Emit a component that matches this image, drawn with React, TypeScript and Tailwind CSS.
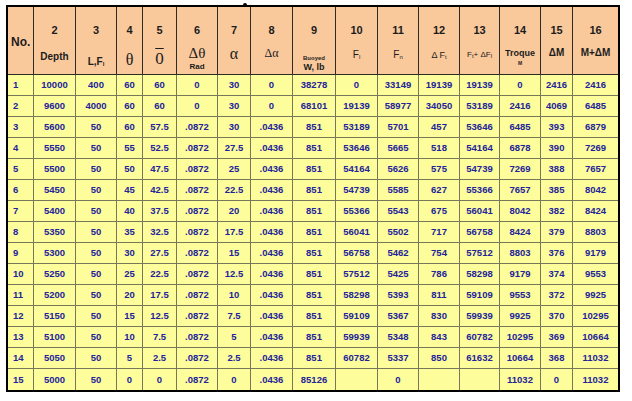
import type { ReactNode } from "react";

const WIDTHS = [26, 42, 41, 26, 34, 41, 33, 42, 43, 42, 41, 41, 40, 41, 32, 45];

const ROWS: string[][] = [
  ["1", "10000", "400", "60", "60", "0", "30", "0", "38278", "0", "33149", "19139", "19139", "0", "2416", "2416"],
  ["2", "9600", "4000", "60", "60", "0", "30", "0", "68101", "19139", "58977", "34050", "53189", "2416", "4069", "6485"],
  ["3", "5600", "50", "60", "57.5", ".0872", "30", ".0436", "851", "53189", "5701", "457", "53646", "6485", "393", "6879"],
  ["4", "5550", "50", "55", "52.5", ".0872", "27.5", ".0436", "851", "53646", "5665", "518", "54164", "6878", "390", "7269"],
  ["5", "5500", "50", "50", "47.5", ".0872", "25", ".0436", "851", "54164", "5626", "575", "54739", "7269", "388", "7657"],
  ["6", "5450", "50", "45", "42.5", ".0872", "22.5", ".0436", "851", "54739", "5585", "627", "55366", "7657", "385", "8042"],
  ["7", "5400", "50", "40", "37.5", ".0872", "20", ".0436", "851", "55366", "5543", "675", "56041", "8042", "382", "8424"],
  ["8", "5350", "50", "35", "32.5", ".0872", "17.5", ".0436", "851", "56041", "5502", "717", "56758", "8424", "379", "8803"],
  ["9", "5300", "50", "30", "27.5", ".0872", "15", ".0436", "851", "56758", "5462", "754", "57512", "8803", "376", "9179"],
  ["10", "5250", "50", "25", "22.5", ".0872", "12.5", ".0436", "851", "57512", "5425", "786", "58298", "9179", "374", "9553"],
  ["11", "5200", "50", "20", "17.5", ".0872", "10", ".0436", "851", "58298", "5393", "811", "59109", "9553", "372", "9925"],
  ["12", "5150", "50", "15", "12.5", ".0872", "7.5", ".0436", "851", "59109", "5367", "830", "59939", "9925", "370", "10295"],
  ["13", "5100", "50", "10", "7.5", ".0872", "5", ".0436", "851", "59939", "5348", "843", "60782", "10295", "369", "10664"],
  ["14", "5050", "50", "5", "2.5", ".0872", "2.5", ".0436", "851", "60782", "5337", "850", "61632", "10664", "368", "11032"],
  ["15", "5000", "50", "0", "0", ".0872", "0", ".0436", "85126", "", "0", "", "", "11032", "0", "11032"],
];

const serif = "font-['Liberation_Serif',serif] font-normal";

function Sub({ children }: { children: ReactNode }) {
  return <span className="text-[6px] align-[-1px]">{children}</span>;
}

// second line of each header cell, with its own top offset
const HEADS: { num: string; sub: ReactNode; mt: string }[] = [
  { num: "2", sub: <span className="text-[10px]">Depth</span>, mt: "mt-[15px]" },
  { num: "3", sub: <span className="text-[10px]">L,F<Sub>l</Sub></span>, mt: "mt-[20px]" },
  { num: "4", sub: <span className={`${serif} text-[16px]`}>θ</span>, mt: "mt-[18px]" },
  { num: "5", sub: <span className={`${serif} text-[17px] overline`}>0</span>, mt: "mt-[17px]" },
  {
    num: "6",
    sub: (
      <span className="flex flex-col items-center">
        <span className={`${serif} text-[15px] leading-[15px]`}>Δθ</span>
        <span className="mt-[2px] text-[8px] leading-[8px]">Rad</span>
      </span>
    ),
    mt: "mt-[10px]",
  },
  { num: "7", sub: <span className={`${serif} text-[16px]`}>α</span>, mt: "mt-[12px]" },
  { num: "8", sub: <span className={`${serif} text-[12px]`}>Δα</span>, mt: "mt-[11px]" },
  {
    num: "9",
    sub: (
      <span className="flex flex-col items-center">
        <span className="text-[6px] leading-[8px]">Buoyed</span>
        <span className="text-[9px] leading-[10px]">W, lb</span>
      </span>
    ),
    mt: "mt-[18px]",
  },
  { num: "10", sub: <span className="text-[10px] font-normal">F<Sub>l</Sub></span>, mt: "mt-[13px]" },
  { num: "11", sub: <span className="text-[10px] font-normal">F<Sub>n</Sub></span>, mt: "mt-[13px]" },
  { num: "12", sub: <span className="text-[9px] font-normal">Δ F<Sub>t</Sub></span>, mt: "mt-[13px]" },
  { num: "13", sub: <span className="text-[8px] font-normal">F<Sub>t</Sub>+ ΔF<Sub>l</Sub></span>, mt: "mt-[13px]" },
  {
    num: "14",
    sub: (
      <span className="flex flex-col items-center">
        <span className="text-[9px] leading-[10px]">Troque</span>
        <span className="text-[5px] leading-[10px]">M</span>
      </span>
    ),
    mt: "mt-[12px]",
  },
  { num: "15", sub: <span className="text-[10px]">ΔM</span>, mt: "mt-[11px]" },
  { num: "16", sub: <span className="text-[10px]">M+ΔM</span>, mt: "mt-[11px]" },
];

export default function App() {
  return (
    <div className="w-[632px] h-[401px] bg-white pl-[6px] pt-[5px] font-['Liberation_Sans',Arial,sans-serif] font-bold">
      <div className="relative w-[614px] border-2 border-black">
        <span className="absolute -top-[4px] left-[235px] w-[4px] h-[3px] rounded-t-full bg-black" />
        <table className="border-separate border-spacing-0 table-fixed w-[610px]">
          <colgroup>
            {WIDTHS.map((w, i) => (
              <col key={i} style={{ width: w }} />
            ))}
          </colgroup>
          <thead>
            <tr>
              <th className="p-0 h-[68px] bg-[#f9c99c] border-r border-b border-[#2e2a26] text-left align-middle">
                <span className="pl-[3px] text-[12px] text-[#1c1c1c]">No.</span>
              </th>
              {HEADS.map((h, i) => (
                <th
                  key={h.num}
                  className={`p-0 h-[68px] bg-[#f9c99c] border-b border-[#2e2a26] align-top text-[#1c1c1c] ${
                    i < HEADS.length - 1 ? "border-r" : ""
                  }`}
                >
                  <div className="flex flex-col items-center pt-[17px]">
                    <span className="text-[11px] leading-[12px]">{h.num}</span>
                    <span className={`${h.mt} leading-[12px] flex`}>{h.sub}</span>
                  </div>
                </th>
              ))}
            </tr>
          </thead>
          <tbody>
            {ROWS.map((row, r) => (
              <tr key={r}>
                {row.map((v, c) => (
                  <td
                    key={c}
                    className={`p-0 h-[21px] bg-[#fdfd9c] border-[#77775c] text-[9.5px] leading-none text-[#23239a] ${
                      c === 0 ? "text-left pl-[5px]" : "text-center"
                    } ${c < row.length - 1 ? "border-r" : ""} ${r < ROWS.length - 1 ? "border-b" : ""}`}
                  >
                    {v}
                  </td>
                ))}
              </tr>
            ))}
          </tbody>
        </table>
      </div>
    </div>
  );
}
